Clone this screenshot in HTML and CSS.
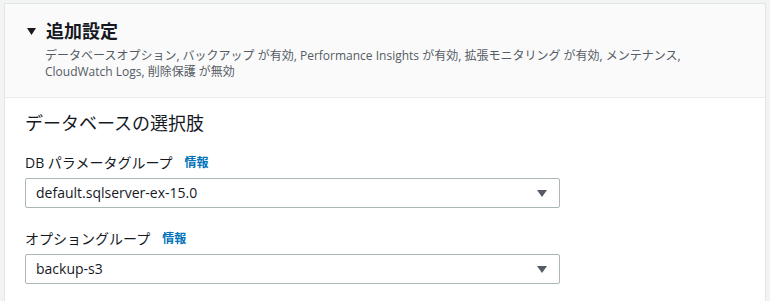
FILE: index.html
```html
<!DOCTYPE html>
<html lang="ja">
<head>
<meta charset="utf-8">
<title>追加設定</title>
<link rel="stylesheet" href="styles.css">
</head>
<body>
<div class="card">
  <div class="card-header">
    <div class="title-row">
      <svg class="caret" width="9" height="7" viewBox="0 0 9 7"><polygon points="0,0 9,0 4.5,7" fill="#16191f"/></svg>
      <h2 class="title">追加設定</h2>
    </div>
    <p class="desc">データベースオプション, バックアップ が有効, Performance Insights が有効, 拡張モニタリング が有効, メンテナンス,<br>CloudWatch Logs, 削除保護 が無効</p>
  </div>
  <div class="card-body">
    <h3 class="section-title">データベースの選択肢</h3>
    <div class="field">
      <div class="label-row"><span class="label">DB パラメータグループ</span><a class="info">情報</a></div>
      <div class="select">
        <span class="select-value">default.sqlserver-ex-15.0</span>
        <svg class="select-caret" width="10" height="7" viewBox="0 0 10 7"><polygon points="0,0 10,0 5,7" fill="#545b64"/></svg>
      </div>
    </div>
    <div class="field">
      <div class="label-row"><span class="label">オプショングループ</span><a class="info">情報</a></div>
      <div class="select">
        <span class="select-value">backup-s3</span>
        <svg class="select-caret" width="10" height="7" viewBox="0 0 10 7"><polygon points="0,0 10,0 5,7" fill="#545b64"/></svg>
      </div>
    </div>
  </div>
</div>
</body>
</html>
```

FILE: styles.css
```css
* { box-sizing: border-box; }
html, body { margin: 0; padding: 0; }
body {
  background: #f2f3f3;
  font-family: "Open Sans", "Noto Sans CJK JP", sans-serif;
  color: #16191f;
  height: 301px;
  overflow: hidden;
}
.card {
  margin: 3px 0 0 4px;
  width: 762px;
  background: #ffffff;
  border: 1px solid #e3e6e6;
  border-bottom: none;
  height: 298px;
}
.card-header {
  background: #fafafa;
  border-bottom: 1px solid #eaeded;
  padding: 16px 20px 0 22px;
  height: 94px;
}
.title-row {
  display: flex;
  align-items: center;
  height: 22px;
}
.caret {
  display: block;
  margin-right: 10px;
  margin-top: 1px;
}
.title {
  margin: 0;
  font-size: 18px;
  font-weight: 700;
  line-height: 22px;
}
.desc {
  margin: 6px 0 0 18px;
  font-size: 12px;
  line-height: 16px;
  color: #545b64;
}
.card-body {
  padding: 13px 20px 0 20px;
}
.section-title {
  margin: 0;
  font-size: 18px;
  font-weight: 400;
  line-height: 24px;
}
.field {
  margin-top: 17px;
}
.field + .field {
  margin-top: 20px;
}
.label-row {
  display: flex;
  align-items: center;
  height: 20px;
  padding-top: 1px;
}
.label {
  font-size: 14px;
  line-height: 20px;
}
.info {
  margin-left: 12px;
  font-size: 12px;
  font-weight: 700;
  color: #0073bb;
  line-height: 20px;
}
.select {
  margin-top: 6px;
  width: 535px;
  height: 30px;
  border: 1px solid #aab7b8;
  border-radius: 2px;
  background: #fff;
  display: flex;
  align-items: center;
  justify-content: space-between;
  padding: 0 12px 0 10px;
}
.select-value {
  font-size: 14px;
  line-height: 20px;
}
.select-caret {
  display: block;
}
```
